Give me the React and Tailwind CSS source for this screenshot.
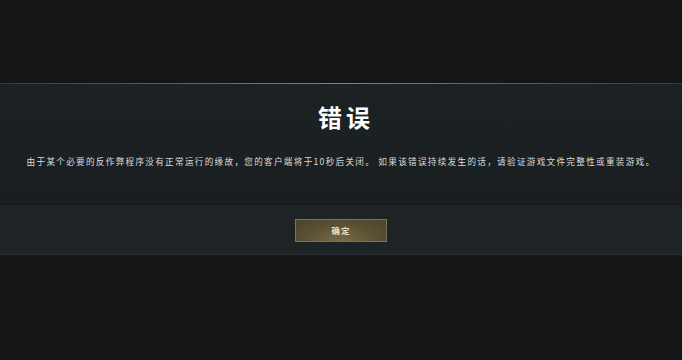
export default function App() {
  return (
    <div
      className="w-[682px] h-[360px] bg-[#131517] flex flex-col overflow-hidden"
      style={{ fontFamily: '"Noto Sans CJK SC", "Noto Sans", sans-serif' }}
    >
      <div className="h-[83px]" />
      <div className="h-px bg-gradient-to-r from-[#3a3b38] via-[#8c8366] to-[#3a3b38]" />
      <section className="flex flex-col bg-gradient-to-b from-[#1c2224] to-[#191c1e]">
        <div className="h-[120px] flex flex-col items-center">
          <h1 className="mt-[17px] pl-[10px] text-[24px] leading-[32px] font-bold text-white tracking-[4px]">
            错误
          </h1>
          <p className="mt-[21px] text-[8.6px] leading-[14px] text-[#dcdcdc] tracking-[1.3px] whitespace-nowrap">
            由于某个必要的反作弊程序没有正常运行的缘故，您的客户端将于10秒后关闭。 如果该错误持续发生的话，请验证游戏文件完整性或重装游戏。
          </p>
        </div>
        <div className="h-[51px] border-t border-[#16191b] bg-[#1e2326] flex items-start justify-center border-b border-b-[#2a3034]">
          <button className="mt-[14px] w-[92px] h-[23px] border border-[#7d7253] bg-[radial-gradient(ellipse_at_50%_100%,#7a6c45_0%,#5a5133_55%,#4a4430_100%)] text-[8.5px] font-bold text-[#ece3c8] tracking-[1px]">
            确定
          </button>
        </div>
      </section>
    </div>
  );
}
